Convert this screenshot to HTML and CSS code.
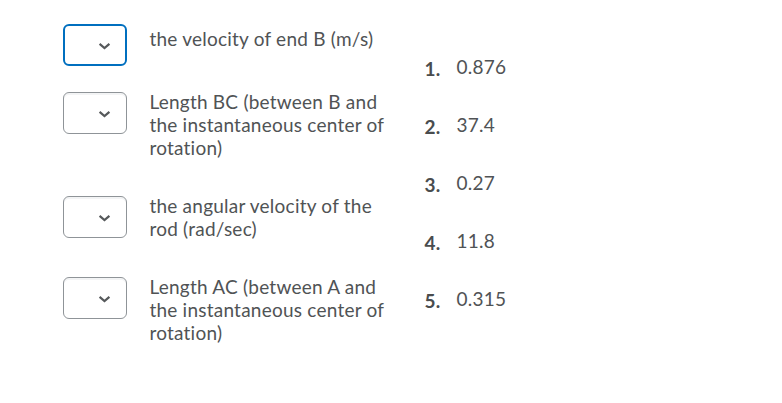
FILE: index.html
```html
<!DOCTYPE html>
<html lang="en">
<head>
    <meta charset="UTF-8">
    <meta name="viewport" content="width=device-width, initial-scale=1.0">
    <title>Matching Question</title>
    <link rel="stylesheet" href="styles.css">
</head>
<body>

    <div class="matching">
        <!-- Prompts with their dropdowns -->
        <div class="prompts">
            <div class="prompt">
                <button class="select active"><svg class="chevron" viewBox="0 0 13 8"><path d="M1.6 1.8l4.9 4.2 4.9-4.2"/></svg></button>
                <p>the velocity of end B (m/s)</p>
            </div>
            <div class="prompt">
                <button class="select"><svg class="chevron" viewBox="0 0 13 8"><path d="M1.6 1.8l4.9 4.2 4.9-4.2"/></svg></button>
                <p>Length BC (between B and<br>the instantaneous center of<br>rotation)</p>
            </div>
            <div class="prompt">
                <button class="select"><svg class="chevron" viewBox="0 0 13 8"><path d="M1.6 1.8l4.9 4.2 4.9-4.2"/></svg></button>
                <p>the angular velocity of the<br>rod (rad/sec)</p>
            </div>
            <div class="prompt">
                <button class="select"><svg class="chevron" viewBox="0 0 13 8"><path d="M1.6 1.8l4.9 4.2 4.9-4.2"/></svg></button>
                <p>Length AC (between A and<br>the instantaneous center of<br>rotation)</p>
            </div>
        </div>

        <!-- Numbered choices -->
        <div class="choices">
            <div class="choice"><span class="number">1.</span><span>0.876</span></div>
            <div class="choice"><span class="number">2.</span><span>37.4</span></div>
            <div class="choice"><span class="number">3.</span><span>0.27</span></div>
            <div class="choice"><span class="number">4.</span><span>11.8</span></div>
            <div class="choice"><span class="number">5.</span><span>0.315</span></div>
        </div>
    </div>

</body>
</html>
```
FILE: styles.css
```css
body {
    margin: 0;
    background: #ffffff;
    color: #505355;
    font-family: Lato, sans-serif;
    font-size: 19px;
    line-height: 23px;
    letter-spacing: 0.23px;
}

.matching {
    display: flex;
    padding: 22px 0 0 63px;
}

/* Prompts */
.prompts {
    display: flex;
    flex-direction: column;
    width: 361.5px;
}

.prompt {
    display: flex;
    align-items: flex-start;
    gap: 22.4px;
    margin-bottom: 35px;
}

.prompt:first-child {
    margin-bottom: 24px;
}

.prompt p {
    margin: 0;
    white-space: nowrap;
}

.prompt:first-child p {
    padding-top: 5px;
}

.select {
    display: flex;
    align-items: center;
    box-sizing: border-box;
    width: 64px;
    height: 42px;
    margin: 2px 0 0;
    padding: 2px 0 0 34px;
    background: #ffffff;
    border: 1px solid #8f9498;
    border-radius: 6px;
    box-shadow: inset 0 2px 0 #f3f4f5;
}

.select.active {
    padding-left: 33px;
    border: 2px solid #006fbf;
    box-shadow: none;
}

.chevron {
    width: 13px;
    height: 8px;
    fill: none;
    stroke: #56595b;
    stroke-width: 2.2;
}

/* Choices */
.choices {
    display: flex;
    flex-direction: column;
    gap: 34px;
    padding-top: 33px;
}

.choice {
    display: flex;
    height: 24px;
}

.number {
    width: 32px;
    padding-top: 2px;
    color: #494c4e;
    font-weight: bold;
}
```
